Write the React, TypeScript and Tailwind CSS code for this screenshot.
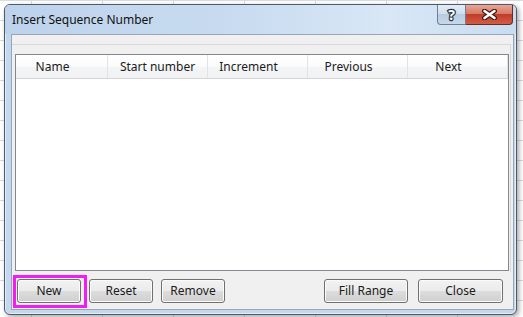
import React from "react";

const btn =
  "h-[24px] flex items-center justify-center rounded-[3px] border border-[#707070] bg-[linear-gradient(#f2f2f2_0%,#ebebeb_50%,#dddddd_50%,#cfcfcf_100%)] shadow-[inset_0_0_0_1px_#fbfbfb] text-[12px] leading-[16px] text-[#1b1b1b]";

const HelpGlyph = () => (
  <span className="text-[14px] leading-[15px] font-bold text-white [-webkit-text-stroke:2.5px_#2b3645] [paint-order:stroke_fill]">
    ?
  </span>
);

const CloseGlyph = () => (
  <svg width="15" height="11" viewBox="0 0 15 11">
    <path d="M2.5 2 L12.5 9 M12.5 2 L2.5 9" stroke="#3f1712" strokeWidth="4.8" strokeLinecap="round" fill="none" />
    <path d="M2.5 2 L12.5 9 M12.5 2 L2.5 9" stroke="#ffffff" strokeWidth="2.6" strokeLinecap="round" fill="none" />
  </svg>
);

export default function App() {
  return (
    <div className="w-[523px] h-[317px] overflow-hidden bg-white bg-[linear-gradient(90deg,#d8dbdf_1px,transparent_1px),linear-gradient(#d8dbdf_1px,transparent_1px)] bg-[size:71px_20px] bg-[position:31px_0] pl-[4px] pt-[4px] font-['Noto_Sans','Liberation_Sans',sans-serif]">
      <div className="w-[513px] h-[311px] flex flex-col rounded-[6px] border border-[#4f5a68] bg-[#c3d8ee] shadow-[2px_2px_5px_rgba(0,0,0,0.35),inset_0_0_0_1px_rgba(255,255,255,0.55)]">
        {/* title bar */}
        <div className="h-[29px] flex items-start rounded-t-[5px] bg-[linear-gradient(90deg,#bdd3eb_0%,#c8dbf0_45%,#d9e7f6_75%,#c9dcf0_100%)]">
          <div className="pl-[7px] pt-[7px] text-[12px] leading-[16px] text-[#111]">Insert Sequence Number</div>
          <div className="ml-auto mr-[3px] flex">
            <div className="w-[29px] h-[20px] flex items-center justify-center rounded-bl-[4px] border border-t-0 border-[#6f7f93] bg-[linear-gradient(#e4edf7_0%,#cfdcec_50%,#b9cbe0_50%,#c8d8ea_100%)]">
              <HelpGlyph />
            </div>
            <div className="w-[47px] h-[20px] flex items-center justify-center rounded-br-[4px] border border-l-0 border-t-0 border-[#6b2a22] bg-[linear-gradient(#e9a596_0%,#d77a66_45%,#c03d28_50%,#d35c44_100%)]">
              <CloseGlyph />
            </div>
          </div>
        </div>

        {/* client area */}
        <div className="ml-[6px] mr-[2px] h-[276px] flex flex-col border border-[#97a6b8] bg-[#f0f0f0] pt-[9px]">
          <div className="mr-[2px] border-t border-r border-[#d8d8d8] pl-[3px] pt-[9px] pb-[1px]">
            <div className="w-[494px] h-[217px] border border-[#828790] bg-white">
              <div className="h-[24px] flex border-b border-[#d5d5d5] bg-[linear-gradient(#ffffff_0%,#fbfbfc_50%,#f3f4f6_51%,#f1f2f4_100%)] text-[12px] leading-[16px] text-[#1b1b1b]">
                <div className="w-[92px] flex items-center justify-center pr-[18px] border-r border-[#e2e3e5]">Name</div>
                <div className="w-[100px] flex items-center justify-center border-r border-[#e2e3e5]">Start number</div>
                <div className="w-[100px] flex items-center justify-center pr-[18px] border-r border-[#e2e3e5]">Increment</div>
                <div className="w-[100px] flex items-center justify-center pr-[18px] border-r border-[#e2e3e5]">Previous</div>
                <div className="w-[100px] flex items-center justify-center pr-[18px] border-r border-[#e2e3e5]">Next</div>
              </div>
            </div>
          </div>

          {/* buttons */}
          <div className="mt-[3px] h-[33px] flex items-start pl-[1px] pr-[10px]">
            <div className="border-[3px] border-[#f31cf3] pl-[1px] pr-[3px] pt-[1px] pb-[2px]">
              <div className={`${btn} w-[64px]`}>New</div>
            </div>
            <div className={`${btn} w-[64px] ml-[2px] mt-[4px]`}>Reset</div>
            <div className={`${btn} w-[64px] ml-[8px] mt-[4px]`}>Remove</div>
            <div className={`${btn} w-[84px] ml-auto mt-[4px]`}>Fill Range</div>
            <div className={`${btn} w-[85px] ml-[10px] mt-[4px] border-[#3c7fb1] shadow-[inset_0_0_0_1px_#9fdcf8]`}>Close</div>
          </div>
        </div>
      </div>
    </div>
  );
}
